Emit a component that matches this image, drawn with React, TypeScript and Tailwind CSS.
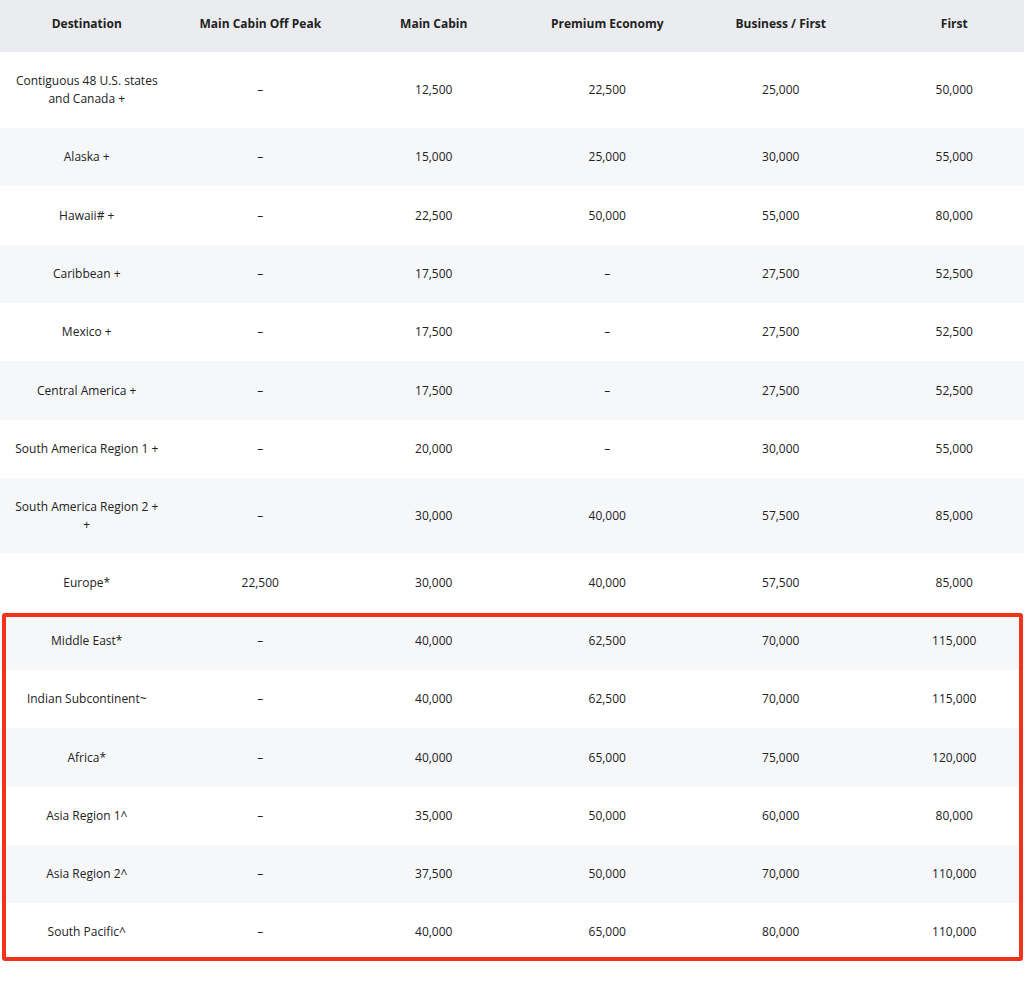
const headers = ["Destination", "Main Cabin Off Peak", "Main Cabin", "Premium Economy", "Business / First", "First"];

const rows: { h: string; d: string[] }[] = [
  { h: "h-[76px]", d: ["Contiguous 48 U.S. states\nand Canada +", "–", "12,500", "22,500", "25,000", "50,000"] },
  { h: "h-[58px]", d: ["Alaska +", "–", "15,000", "25,000", "30,000", "55,000"] },
  { h: "h-[59px]", d: ["Hawaii# +", "–", "22,500", "50,000", "55,000", "80,000"] },
  { h: "h-[58px]", d: ["Caribbean +", "–", "17,500", "–", "27,500", "52,500"] },
  { h: "h-[58px]", d: ["Mexico +", "–", "17,500", "–", "27,500", "52,500"] },
  { h: "h-[59px]", d: ["Central America +", "–", "17,500", "–", "27,500", "52,500"] },
  { h: "h-[58px]", d: ["South America Region 1 +", "–", "20,000", "–", "30,000", "55,000"] },
  { h: "h-[75px]", d: ["South America Region 2 +\n+", "–", "30,000", "40,000", "57,500", "85,000"] },
  { h: "h-[59px]", d: ["Europe*", "22,500", "30,000", "40,000", "57,500", "85,000"] },
  { h: "h-[58px]", d: ["Middle East*", "–", "40,000", "62,500", "70,000", "115,000"] },
  { h: "h-[58px]", d: ["Indian Subcontinent~", "–", "40,000", "62,500", "70,000", "115,000"] },
  { h: "h-[59px]", d: ["Africa*", "–", "40,000", "65,000", "75,000", "120,000"] },
  { h: "h-[58px]", d: ["Asia Region 1^", "–", "35,000", "50,000", "60,000", "80,000"] },
  { h: "h-[58px]", d: ["Asia Region 2^", "–", "37,500", "50,000", "70,000", "110,000"] },
  { h: "h-[58px]", d: ["South Pacific^", "–", "40,000", "65,000", "80,000", "110,000"] },
];

export default function App() {
  return (
    <div className="relative w-[1024px] h-[998px] overflow-hidden bg-white text-[#222] text-[12px]" style={{ fontFamily: '"Open Sans", "Noto Sans", sans-serif' }}>
      <div className="w-[1041px]">
        <div className="grid grid-cols-6 h-[52px] bg-[#ebecef] items-center pb-[4px]">
          {headers.map((t) => (
            <div key={t} className="text-center font-bold text-[12px]">{t}</div>
          ))}
        </div>
        {rows.map((r, i) => (
          <div key={i} className={`grid grid-cols-6 items-center ${r.h} ${i % 2 === 1 ? "bg-[#f6f7f9]" : "bg-white"}`}>
            {r.d.map((c, j) => (
              <div key={j} className="text-center whitespace-pre-line leading-[18px]">{c}</div>
            ))}
          </div>
        ))}
      </div>
      <div className="absolute left-[2px] top-[613px] w-[1021px] h-[348px] border-4 border-[#f3321c] rounded-[3px]" />
    </div>
  );
}
